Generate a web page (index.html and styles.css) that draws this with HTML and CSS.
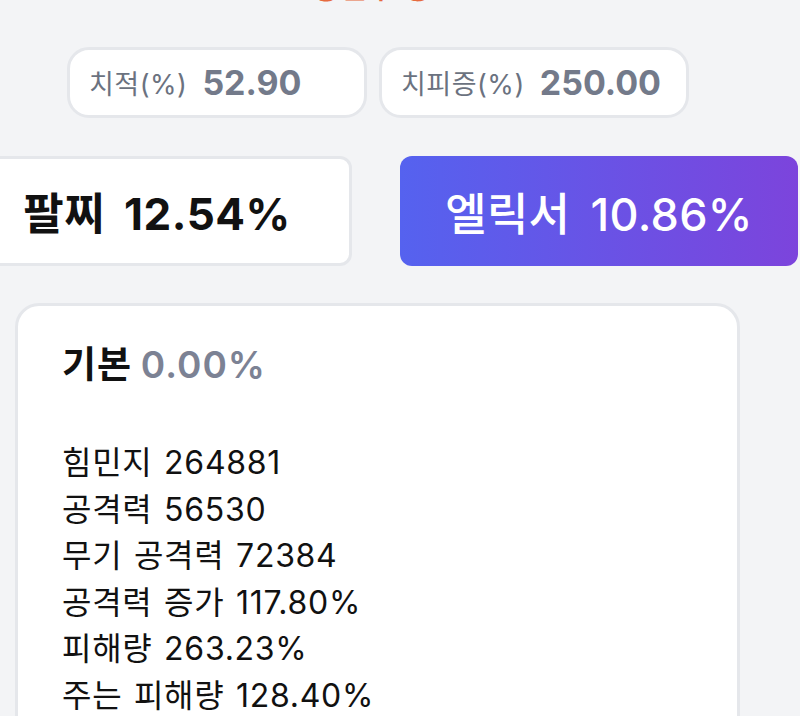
FILE: index.html
```html
<!DOCTYPE html>
<html lang="ko">
<head>
<meta charset="utf-8">
<title>스탯</title>
<link rel="stylesheet" href="styles.css">
</head>
<body>
<div class="page">
  <h2 class="heading">장신구 정보</h2>
  <div class="pills">
    <div class="pill pill-a"><span class="pill-label">치적(%)</span><span class="pill-value">52.90</span></div>
    <div class="pill pill-b"><span class="pill-label">치피증(%)</span><span class="pill-value">250.00</span></div>
  </div>
  <div class="row">
    <div class="box box-plain">팔찌 12.54%</div>
    <div class="box box-grad">엘릭서 10.86%</div>
  </div>
  <div class="card">
    <div class="card-title"><span class="card-name">기본</span> <span class="card-pct">0.00%</span></div>
    <ul class="stats">
      <li>힘민지 264881</li>
      <li>공격력 56530</li>
      <li>무기 공격력 72384</li>
      <li>공격력 증가 117.80%</li>
      <li>피해량 263.23%</li>
      <li>주는 피해량 128.40%</li>
    </ul>
  </div>
</div>
</body>
</html>
```
FILE: styles.css
```css
html, body {
  margin: 0;
  padding: 0;
}
body {
  background: #f3f4f6;
  font-family: Inter, "Noto Sans CJK KR", sans-serif;
  color: #111111;
  overflow: hidden;
  height: 716px;
}
.page {
  width: 800px;
}
.heading {
  margin: -31px 0 0 0;
  width: 770px;
  text-align: center;
  font-size: 30px;
  line-height: 36px;
  font-weight: 500;
  color: #e66a3f;
}
.pills {
  display: flex;
  gap: 12px;
  margin-top: 42px;
  padding-left: 67px;
}
.pill {
  box-sizing: border-box;
  height: 71px;
  border: 3px solid #e5e7eb;
  border-radius: 22px;
  background: #ffffff;
  display: flex;
  align-items: center;
  gap: 15px;
  padding-left: 19px;
}
.pill-a { width: 300px; }
.pill-b { width: 310px; }
.pill-label {
  font-size: 27px;
  letter-spacing: 0.5px;
  color: #6b7280;
  font-weight: 400;
}
.pill-value {
  font-size: 34px;
  font-weight: 700;
  color: #737a8a;
}
.row {
  display: grid;
  grid-template-columns: 398px 398px;
  gap: 48px;
  margin-left: -46px;
  margin-top: 38px;
}
.box {
  box-sizing: border-box;
  height: 110px;
  border-radius: 12px;
  display: flex;
  align-items: center;
  justify-content: center;
  font-size: 44px;
  word-spacing: 8px;
}
.box-plain {
  background: #ffffff;
  border: 3px solid #e5e7eb;
  font-weight: 700;
  color: #111111;
  padding-left: 8px;
  letter-spacing: 0.5px;
}
.box-grad {
  background: linear-gradient(90deg, #5562ef 0%, #7c44dc 100%);
  color: #ffffff;
  font-weight: 500;
  font-size: 45px;
  letter-spacing: 0.3px;
}
.card {
  box-sizing: border-box;
  margin-top: 37px;
  margin-left: 15px;
  width: 725px;
  height: 600px;
  background: #ffffff;
  border: 3px solid #e5e7eb;
  border-radius: 24px;
  padding: 36px 44px 0 44px;
}
.card-title {
  font-size: 37px;
  line-height: 46px;
  font-weight: 700;
}
.card-name {
  color: #111111;
  letter-spacing: 1px;
}
.card-pct {
  color: #7c8294;
  font-weight: 600;
  letter-spacing: 1px;
}
.stats {
  list-style: none;
  margin: 52px 0 0 0;
  padding: 0;
  font-size: 32px;
  line-height: 46.5px;
  font-weight: 400;
  letter-spacing: 0.7px;
  word-spacing: 2px;
  color: #111111;
}
```
